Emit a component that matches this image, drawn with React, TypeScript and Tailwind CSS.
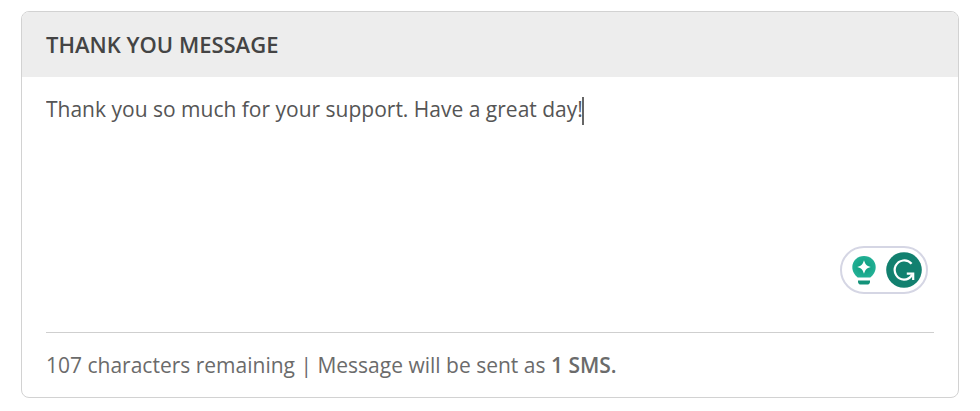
import { useState } from "react"

const MAX_LENGTH = 160

function BulbIcon() {
  return (
    <svg className="h-8 w-6" viewBox="0 0 24 32" fill="none" aria-hidden="true">
      <defs>
        <radialGradient id="bulb" cx="50%" cy="50%" r="50%">
          <stop offset="0" stopColor="#0d9b7c" />
          <stop offset="1" stopColor="#22b095" />
        </radialGradient>
      </defs>
      <path d="M12 2C5.500 2 .3 6.900 .3 13c0 4.700 2.400 8 5.400 10.600h12.600c3-2.600 5.400-5.900 5.400-10.600C23.700 6.900 18.500 2 12 2z" fill="url(#bulb)" />
      <path d="M12 6.200c1.500 4.500 2.300 5.300 6.800 6.800-4.500 1.500-5.300 2.300-6.800 6.800-1.500-4.500-2.300-5.300-6.800-6.800 4.500-1.500 5.300-2.300 6.800-6.800z" fill="#fff" />
      <path d="M6 26.500h12v1.200c0 1.900-1.200 2.800-2.800 2.800H8.800C7.200 30.500 6 29.600 6 27.700z" fill="#13937a" />
    </svg>
  )
}

function GrammarIcon() {
  return (
    <svg className="h-9 w-9" viewBox="0 0 36 36" fill="none" aria-hidden="true">
      <circle cx="18" cy="18" r="17.800" fill="#12806f" />
      <path d="M25.600 11.800A9.600 9.600 0 1 0 18 27.600c3.600 0 6.200-1.600 8.200-5" stroke="#fff" strokeWidth="2.200" />
      <path d="M20.800 21.600h6.400v6.400" stroke="#fff" strokeWidth="2.200" />
    </svg>
  )
}

export default function App() {
  const [message, setMessage] = useState("Thank you so much for your support. Have a great day!")

  const remaining = MAX_LENGTH - message.length

  return (
    <main className="bg-white px-[21px] pt-[11px] pb-3 font-['Open_Sans',sans-serif] text-[21px] leading-8">
      <section className="overflow-hidden rounded-lg border border-[#d2d2d2]">
        {/* Header */}
        <div className="border-b border-[#ededed] bg-[#ededed] px-6 py-4">
          <label htmlFor="message" className="block text-[22px] leading-8 font-semibold text-[#444]">
            THANK YOU MESSAGE
          </label>
        </div>

        {/* Message */}
        <div className="relative mx-6 border-b border-[#cfcfcf]">
          <textarea
            id="message"
            value={message}
            maxLength={MAX_LENGTH}
            spellCheck={false}
            onChange={(e) => setMessage(e.target.value)}
            className="block h-[255px] w-full resize-none bg-transparent pt-4 text-[#555] caret-transparent outline-none"
          />

          {/* Caret sits after the last character */}
          <div className="pointer-events-none absolute inset-x-0 top-4 whitespace-pre-wrap" aria-hidden="true">
            <span className="invisible">{message}</span>
            <span className="-ml-px inline-block h-7 w-0.5 bg-[#666] align-middle"></span>
          </div>

          {/* Writing assistant */}
          <div className="absolute right-1.5 bottom-[38px] flex h-12 items-center gap-2.5 rounded-full border-2 border-[#d5d6e4] bg-white pr-1 pl-2.5">
            <button type="button" aria-label="Suggestions">
              <BulbIcon />
            </button>
            <button type="button" aria-label="Check writing">
              <GrammarIcon />
            </button>
          </div>
        </div>

        {/* Footer */}
        <p className="px-6 py-4 text-[#6b6b6b]">
          {remaining} characters remaining | Message will be sent as <strong className="font-semibold">1 SMS.</strong>
        </p>
      </section>
    </main>
  )
}
